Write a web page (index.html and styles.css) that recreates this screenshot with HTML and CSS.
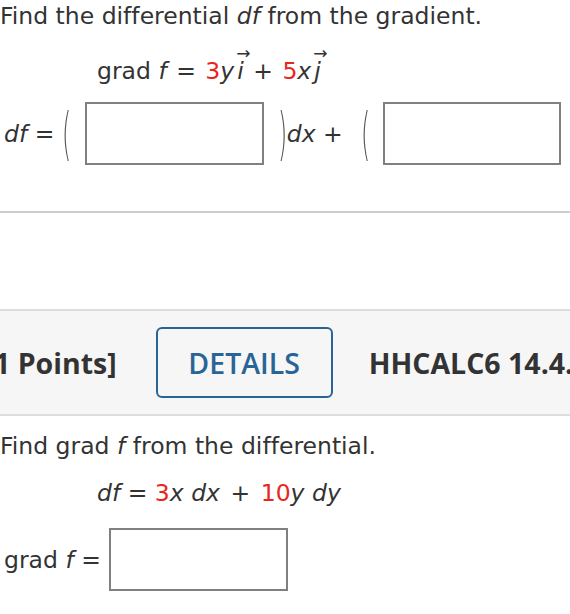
FILE: index.html
```html
<!DOCTYPE html>
<html>
<head>
<meta charset="utf-8">
<link rel="stylesheet" href="styles.css">
</head>
<body>
<div class="page">
  <section class="part">
    <p class="prompt">Find the differential <i>df</i> from the gradient.</p>
    <div class="eq eq-top">grad <i>f</i> <span class="op">=</span> <span class="red">3</span><i>y</i><span class="vec"><i>i</i><span class="arrow">&rarr;</span></span> <span class="op">+</span> <span class="red">5</span><i>x</i><span class="vec"><i>j</i><span class="arrow">&rarr;</span></span></div>
    <div class="answer-row">
      <span class="lbl"><i>df</i> =</span>
      <span class="paren paren-l1">(</span>
      <span class="box box-a"></span>
      <span class="paren paren-r">)</span>
      <span class="lbl-dx"><i>dx</i> +</span>
      <span class="paren paren-l2">(</span>
      <span class="box box-b"></span>
    </div>
  </section>
  <div class="rule"></div>
  <div class="gap"></div>
  <header class="band">
    <span class="points">1 Points]</span>
    <span class="details">DETAILS</span>
    <span class="ref">HHCALC6 14.4.</span>
  </header>
  <section class="part part2">
    <p class="prompt">Find grad <i>f</i> from the differential.</p>
    <div class="eq eq-second"><i>df</i> = <span class="red">3</span><i>x</i> <i>dx</i> <span class="op2">+</span> <span class="red">10</span><i>y</i> <i>dy</i></div>
    <div class="answer-row row2">
      <span class="lbl">grad <i>f</i> =</span>
      <span class="box box-c"></span>
    </div>
  </section>
</div>
</body>
</html>
```
FILE: styles.css
```css
html, body {
  margin: 0;
  padding: 0;
  background: #fff;
}
.page {
  width: 570px;
  height: 614px;
  overflow: hidden;
  font-family: "DejaVu Sans", Verdana, sans-serif;
  font-variant-ligatures: none;
  color: #333;
  font-size: 23.5px;
}
.prompt {
  margin: 0;
  padding-top: 1px;
  line-height: 30px;
  white-space: nowrap;
}
.prompt i, .eq i, .lbl i, .lbl-dx i {
  font-style: oblique;
}
.red {
  color: #e8261e;
}
.eq {
  padding-left: 97px;
  line-height: 30px;
  white-space: nowrap;
}
.op {
  margin: 0 2px;
}
.op2 {
  margin: 0 3px;
}
.eq-top {
  margin-top: 25px;
}
.vec {
  position: relative;
  display: inline-block;
  margin-left: 3px;
}
.arrow {
  position: absolute;
  left: -1px;
  top: -18px;
  font-size: 17px;
  font-style: normal;
}
.answer-row {
  display: flex;
  align-items: center;
  margin-top: 16px;
  height: 63px;
  white-space: nowrap;
}
.answer-row > * {
  flex-shrink: 0;
}
.lbl {
  padding-left: 4px;
}
.paren {
  display: inline-block;
  transform: scaleY(2.4);
  will-change: transform;
  font-weight: 200;
  color: #555;
}
.paren-l1 {
  margin: 0 13px 0 8px;
}
.paren-r {
  margin: 0 0 0 14px;
}
.paren-l2 {
  margin: 0 13px 0 18px;
}
.lbl-dx {
  margin-left: 0;
}
.box {
  display: inline-block;
  box-sizing: border-box;
  height: 63px;
  border: 2px solid #808080;
  background: #fff;
}
.box-a { width: 179px; }
.box-b { width: 178px; }
.rule {
  margin-top: 46px;
  height: 2px;
  background: #ccc;
}
.gap {
  height: 96px;
}
.band {
  box-sizing: border-box;
  height: 107px;
  background: #f6f6f6;
  border-top: 2px solid #ddd;
  border-bottom: 2px solid #ddd;
  display: flex;
  align-items: center;
  font-family: "Open Sans", sans-serif;
  font-weight: 700;
  font-size: 28.5px;
  color: #333;
  white-space: nowrap;
}
.band > * {
  flex-shrink: 0;
}
.points {
  margin-left: -6px;
}
.details {
  box-sizing: border-box;
  margin-left: 39px;
  width: 177px;
  height: 71px;
  border: 2px solid #2a6496;
  border-radius: 6px;
  display: flex;
  align-items: center;
  justify-content: center;
  color: #2a6496;
  font-weight: 600;
}
.ref {
  margin-left: 36px;
}
.part2 .prompt {
  padding-top: 15px;
}
.eq-second {
  margin-top: 17px;
}
.row2 {
  margin-top: 20px;
}
.box-c {
  margin-left: 8px;
  width: 179px;
}
```
